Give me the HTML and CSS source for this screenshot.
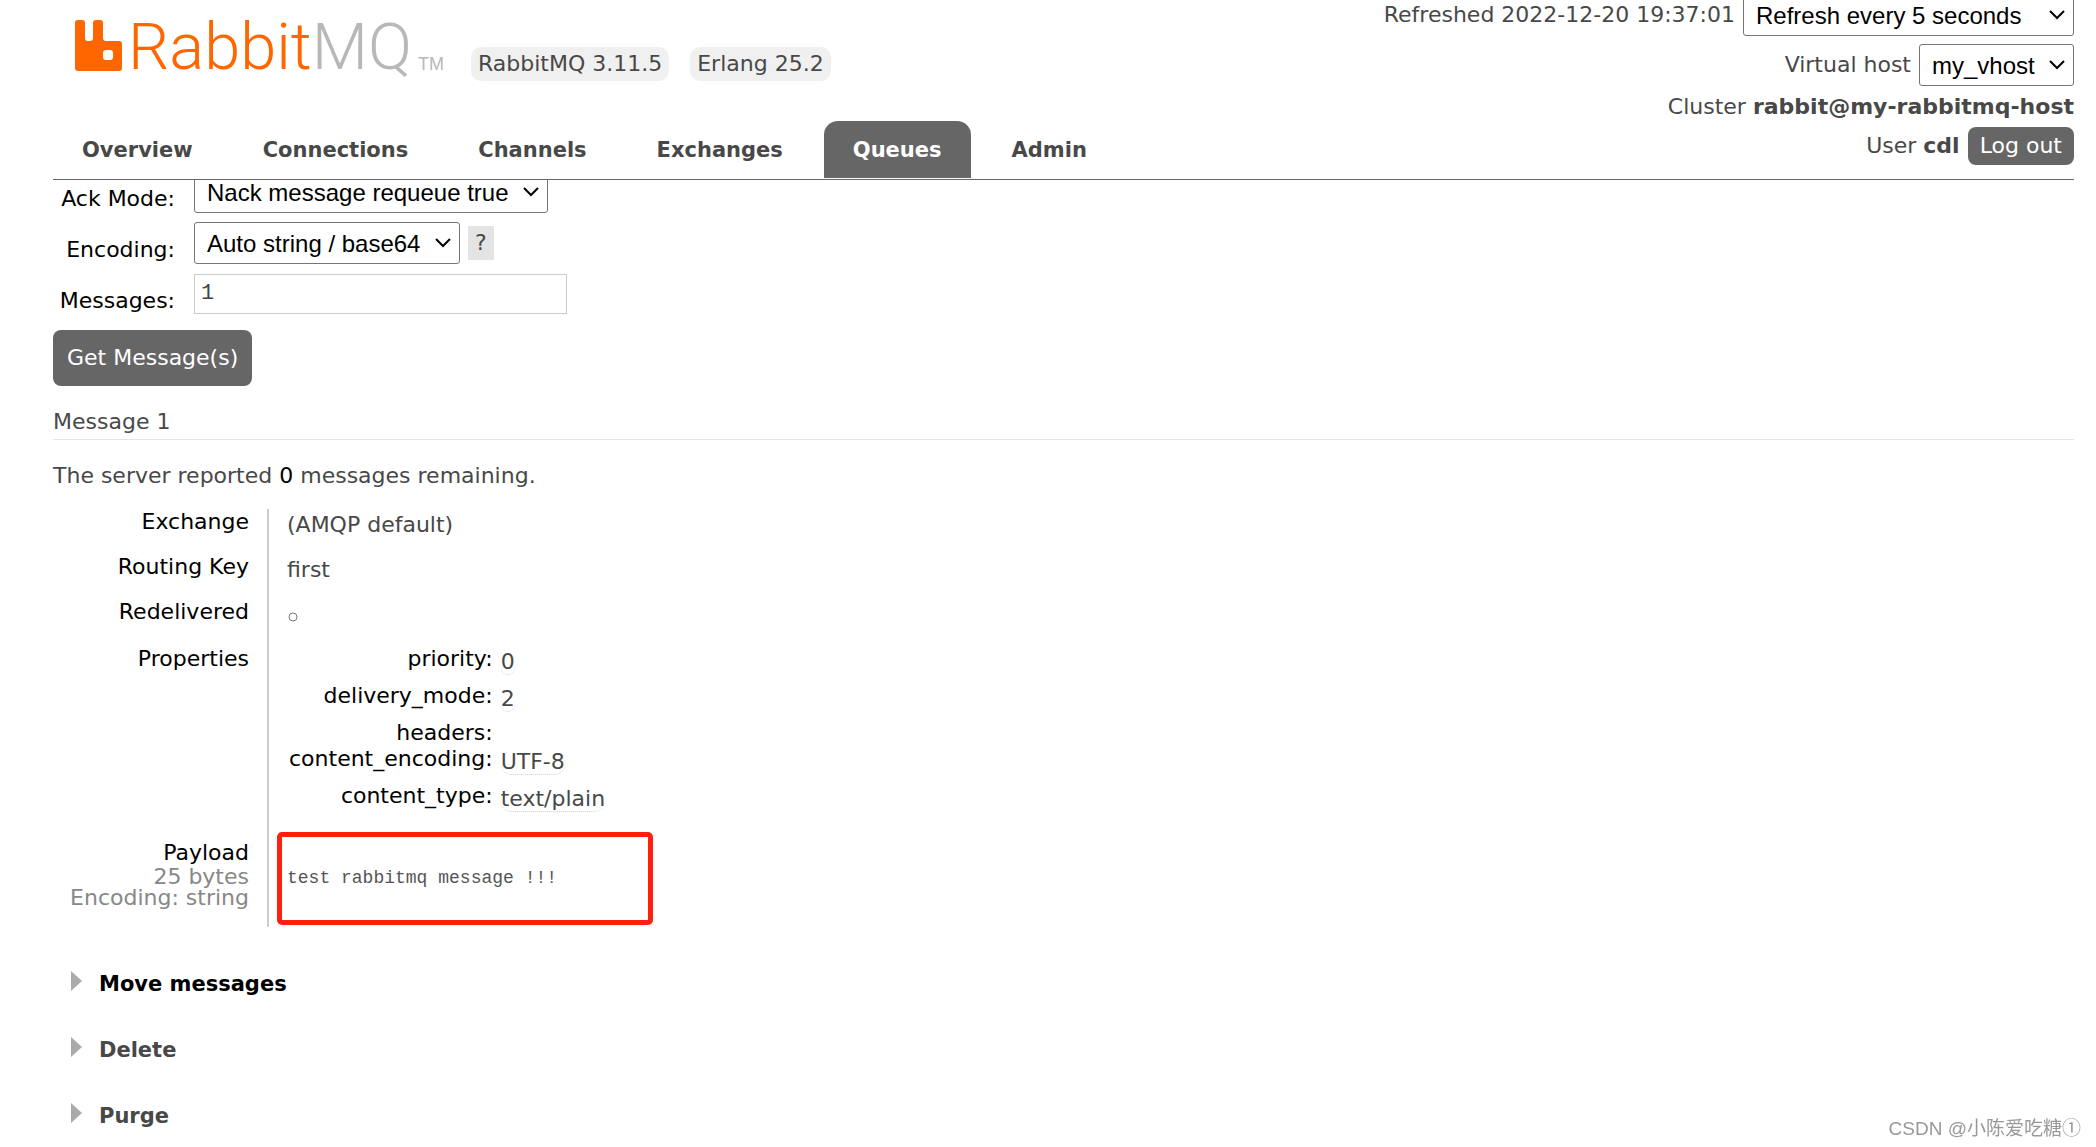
FILE: index.html
```html
<!DOCTYPE html>
<html lang="en">
<head>
<meta charset="utf-8">
<title>RabbitMQ Management</title>
<link rel="stylesheet" href="styles.css">
</head>
<body>
<header class="header">
  <div class="brand">
    <a class="logo" href="#">
      <svg class="logo-mark" viewBox="0 0 47 51" aria-hidden="true"><path fill="#f60" fill-rule="evenodd" d="M3 0h4a3 3 0 0 1 3 3v15a3 3 0 0 0 3 3h2a3 3 0 0 0 3-3V3a3 3 0 0 1 3-3h4a3 3 0 0 1 3 3v15a3 3 0 0 0 3 3h13a3 3 0 0 1 3 3v24a3 3 0 0 1-3 3H3a3 3 0 0 1-3-3V3a3 3 0 0 1 3-3zM31 30a3 3 0 0 0-3 3v4a3 3 0 0 0 3 3h4a3 3 0 0 0 3-3v-4a3 3 0 0 0-3-3z"/></svg>
      <span class="logo-name">Rabbit<span class="logo-mq">MQ</span></span>
      <span class="logo-tm">TM</span>
    </a>
    <span class="version">RabbitMQ 3.11.5</span>
    <span class="version">Erlang 25.2</span>
  </div>
  <nav class="tabs">
    <a class="tab" href="#">Overview</a>
    <a class="tab" href="#">Connections</a>
    <a class="tab" href="#">Channels</a>
    <a class="tab" href="#">Exchanges</a>
    <a class="tab tab-selected" href="#">Queues</a>
    <a class="tab" href="#">Admin</a>
  </nav>
  <div class="status">
    <div class="status-row status-refresh">
      <label for="refresh">Refreshed 2022-12-20 19:37:01</label>
      <span class="select select-refresh"><select id="refresh"><option>Refresh every 5 seconds</option></select><svg class="chevron" viewBox="0 0 16 10"><path d="M1 1l7 7 7-7"/></svg></span>
    </div>
    <div class="status-row status-vhost">
      <label for="vhost">Virtual host</label>
      <span class="select select-vhost"><select id="vhost"><option>my_vhost</option></select><svg class="chevron" viewBox="0 0 16 10"><path d="M1 1l7 7 7-7"/></svg></span>
    </div>
    <div class="status-row status-cluster"><span>Cluster <b>rabbit@my-rabbitmq-host</b></span></div>
    <div class="status-row"><span>User <b>cdl</b></span><button class="button logout" type="button">Log out</button></div>
  </div>
</header>

<main class="main">
  <form class="get-form">
    <div class="field">
      <label for="ack">Ack Mode:</label>
      <span class="select select-ack"><select id="ack"><option>Nack message requeue true</option></select><svg class="chevron" viewBox="0 0 16 10"><path d="M1 1l7 7 7-7"/></svg></span>
    </div>
    <div class="field">
      <label for="encoding">Encoding:</label>
      <span class="select select-encoding"><select id="encoding"><option>Auto string / base64</option></select><svg class="chevron" viewBox="0 0 16 10"><path d="M1 1l7 7 7-7"/></svg></span>
      <a class="help" href="#">?</a>
    </div>
    <div class="field">
      <label for="count">Messages:</label>
      <input class="count" id="count" type="text" value="1">
    </div>
    <button class="button get-button" type="button">Get Message(s)</button>
  </form>

  <h2 class="message-title">Message 1</h2>
  <p class="remaining">The server reported <span class="number">0</span> messages remaining.</p>

  <table class="facts">
    <tr><th>Exchange</th><td>(AMQP default)</td></tr>
    <tr><th>Routing Key</th><td>first</td></tr>
    <tr><th>Redelivered</th><td class="redelivered"><svg class="circle" viewBox="0 0 12 12"><circle cx="6" cy="6" r="4"/></svg></td></tr>
    <tr class="properties-row"><th>Properties</th><td class="properties">
      <table class="props">
        <tr><th>priority:</th><td><abbr class="value">0</abbr></td></tr>
        <tr><th>delivery_mode:</th><td><abbr class="value">2</abbr></td></tr>
        <tr class="props-empty"><th>headers:</th><td></td></tr>
        <tr><th>content_encoding:</th><td><abbr class="value">UTF-8</abbr></td></tr>
        <tr><th>content_type:</th><td><abbr class="value">text/plain</abbr></td></tr>
      </table>
    </td></tr>
    <tr class="payload-row"><th>Payload<span class="sub">25 bytes</span><span class="sub">Encoding: string</span></th><td class="payload"><pre>test rabbitmq message !!!</pre><span class="highlight"></span></td></tr>
  </table>

  <section class="sections">
    <h2 class="section hovered"><svg class="arrow" viewBox="0 0 11 20"><path d="M0 0l11 10L0 20z"/></svg>Move messages</h2>
    <h2 class="section"><svg class="arrow" viewBox="0 0 11 20"><path d="M0 0l11 10L0 20z"/></svg>Delete</h2>
    <h2 class="section"><svg class="arrow" viewBox="0 0 11 20"><path d="M0 0l11 10L0 20z"/></svg>Purge</h2>
  </section>
</main>
<div class="watermark">CSDN @小陈爱吃糖①</div>
</body>
</html>
```
FILE: styles.css
```css
* { box-sizing: border-box; }

body {
  margin: 0;
  overflow: hidden;
  background: #fff;
  color: #484848;
  font: 22px/26px Verdana, "DejaVu Sans", sans-serif;
}

h2, p, pre { margin: 0; }
a { color: inherit; text-decoration: none; }

/* Header */
.header {
  position: relative;
  z-index: 1;
  display: grid;
  grid-template-columns: auto auto;
  grid-template-rows: 121px auto;
  justify-content: space-between;
  margin: 0 22px 0 53px;
  border-bottom: 1px solid #666;
  background: #fff;
}

.brand {
  display: flex;
  align-items: flex-start;
  padding-left: 22px;
}

.logo {
  display: flex;
  flex: none;
  align-items: flex-start;
  width: 396px;
  padding-top: 20px;
}

.logo-mark { width: 47px; height: 51px; }

.logo-name {
  margin-left: 6px;
  color: #f60;
  font: 300 65px/55px Roboto, sans-serif;
}

.logo-mq, .logo-tm { color: #b8b8b8; }

.logo-tm {
  margin: 32px 0 0 6px;
  font: 18px/24px "Liberation Sans", Arial, sans-serif;
}

.version {
  margin: 47px 21px 0 0;
  padding: 4px 7px;
  border-radius: 10px;
  background: #f0f0f0;
  white-space: nowrap;
}

.version + .version { margin-right: 0; }

.tabs {
  display: flex;
  grid-row: 2;
  gap: 12px;
}

.tab {
  margin-bottom: 1px;
  padding: 16px 29px 15px;
  border-radius: 14px 14px 0 0;
  font-size: 21px;
  font-weight: bold;
}

.tab-selected { background: #666; color: #fff; }

.status {
  display: flex;
  flex-direction: column;
  grid-column: 2;
  grid-row: 1 / 3;
  margin-top: -6px;
}

.status-row {
  display: flex;
  justify-content: flex-end;
  align-items: center;
  gap: 8px;
}

.status-refresh, .status-vhost { margin-bottom: 8px; }
.status-cluster { margin-bottom: 7px; }

/* Controls */
.select { display: grid; align-items: center; }

.select select {
  grid-area: 1 / 1;
  width: 100%;
  height: 42px;
  padding: 0 12px;
  border: 1px solid #767676;
  border-radius: 3px;
  background: #fff;
  color: #000;
  font: 24px "Liberation Sans", Arial, sans-serif;
  appearance: none;
}

.chevron {
  grid-area: 1 / 1;
  justify-self: end;
  width: 16px;
  height: 10px;
  margin-right: 9px;
  fill: none;
  stroke: #000;
  stroke-width: 2;
  pointer-events: none;
}

.select-refresh { width: 331px; }
.select-vhost { width: 155px; }
.select-ack { width: 354px; }
.select-encoding { width: 266px; }

.button {
  border: 0;
  border-radius: 8px;
  background: #666;
  color: #fff;
  font: inherit;
  cursor: pointer;
}

.logout { height: 38px; padding: 0 12px; }

/* Content */
.main { margin: -9px 22px 0 53px; }

.field {
  display: flex;
  align-items: flex-start;
  height: 51px;
}

.field label {
  width: 122px;
  margin-right: 19px;
  padding-top: 15px;
  color: #000;
  text-align: right;
}

.help {
  margin: 4px 0 0 8px;
  padding: 4px 7px;
  background: #e4e4e4;
}

.count {
  width: 373px;
  height: 40px;
  margin-top: 1px;
  padding: 0 6px 2px;
  border: 1px solid #ccc;
  color: #444;
  font: 22px "Liberation Mono", monospace;
}

.get-button { height: 56px; margin-top: 6px; padding: 0 14px; }

.message-title {
  margin-top: 23px;
  padding-bottom: 4px;
  border-bottom: 1px solid #e4e4e4;
  font-size: 22px;
  font-weight: normal;
}

.remaining { margin: 23px 0 20px; }
.number { color: #000; }

table { border-collapse: collapse; }

th {
  padding: 0;
  color: #000;
  font-weight: normal;
  text-align: right;
  vertical-align: top;
}

td { padding: 3px 0 0; vertical-align: top; }

.facts > tbody > tr { height: 45px; }

.facts > tbody > tr > th {
  width: 215px;
  padding-right: 18px;
  border-right: 2px solid #ccc;
}

.facts > tbody > tr > td { padding-left: 18px; }
.facts > tbody > .properties-row { height: 196px; }
.facts > tbody > .payload-row { height: 87px; }
.facts > tbody > .properties-row > th,
.facts > tbody > tr > .properties { padding-top: 2px; }

.redelivered { line-height: 28px; }
.circle { width: 12px; height: 12px; fill: none; stroke: #777; }

.props th { padding: 0 8px 0 2px; }
.props td { padding: 3px 0 8px; }
.props .props-empty td { padding: 0; }

.value {
  border-bottom: 1px dotted #ccc;
  border-radius: 10px;
}

.sub { display: block; color: #888; line-height: 21px; }

.payload { position: relative; }

.payload pre {
  padding-top: 22px;
  color: #555;
  font: 18px/26px "Liberation Mono", monospace;
}

.highlight {
  position: absolute;
  top: -8px;
  left: 8px;
  width: 376px;
  height: 93px;
  border: 5px solid #ff2010;
  border-radius: 5px;
}

.sections {
  display: grid;
  gap: 40px;
  margin-top: 44px;
}

.section {
  display: flex;
  align-items: flex-start;
  gap: 17px;
  padding-left: 18px;
  font-size: 21px;
}

.hovered { color: #000; }
.arrow { width: 11px; height: 20px; fill: #aaa; }

.watermark {
  position: fixed;
  right: 15px;
  bottom: 5px;
  color: #999;
  font: 19px/26px "Liberation Sans", "Noto Sans CJK SC", sans-serif;
}
```
